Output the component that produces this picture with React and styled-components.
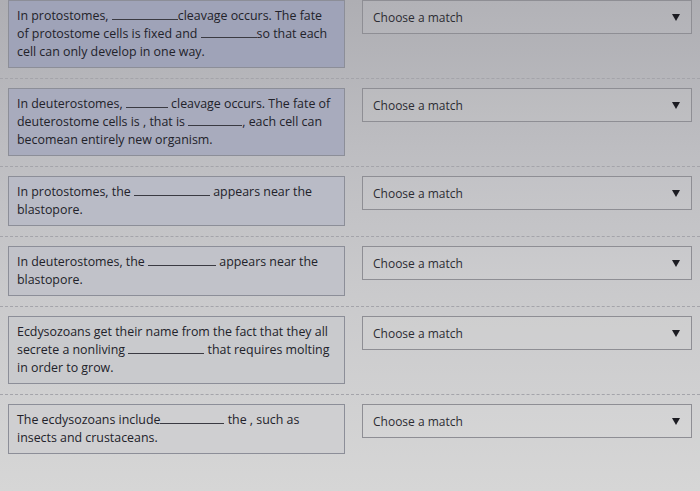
import React from 'react';
import styled, { createGlobalStyle } from 'styled-components';

const GlobalStyle = createGlobalStyle`
  html, body {
    margin: 0;
    padding: 0;
  }
  body {
    width: 700px;
    height: 491px;
    overflow: hidden;
    background: linear-gradient(180deg, #aeaeb3 0%, #bdbdc1 30%, #cacacc 60%, #d6d6d6 100%);
    font-family: "Open Sans", "Noto Sans", sans-serif;
  }
`;

const questions = [
  {
    tone: '#9fa3b8',
    lines: [
      ['In protostomes, ', 66, 'cleavage occurs. The fate'],
      ['of protostome cells is fixed and ', 56, 'so that each'],
      ['cell can only develop in one way.'],
    ],
  },
  {
    tone: '#a8abbd',
    lines: [
      ['In deuterostomes, ', 42, ' cleavage occurs. The fate of'],
      ['deuterostome cells is , that is ', 54, ', each cell can'],
      ['becomean entirely new organism.'],
    ],
  },
  {
    tone: '#b9bbc6',
    lines: [
      ['In protostomes, the ', 76, ' appears near the'],
      ['blastopore.'],
    ],
  },
  {
    tone: '#c1c2c9',
    lines: [
      ['In deuterostomes, the ', 68, ' appears near the'],
      ['blastopore.'],
    ],
  },
  {
    tone: '#c9cacd',
    lines: [
      ['Ecdysozoans get their name from the fact that they all'],
      ['secrete a nonliving ', 76, ' that requires molting'],
      ['in order to grow.'],
    ],
  },
  {
    tone: '#cfcfd1',
    lines: [
      ['The ecdysozoans include', 64, ' the , such as'],
      ['insects and crustaceans.'],
    ],
  },
];

const Page = styled.div`
  display: flex;
  flex-direction: column;
`;

const Row = styled.div`
  display: grid;
  grid-template-columns: 337px 330px;
  column-gap: 17px;
  align-items: start;
  padding: 0 8px 10px 8px;
  margin-bottom: 9px;
  border-bottom: 1px dashed ${props => (props.$last ? 'transparent' : '#a4a4aa')};
`;

const Card = styled.div`
  background-color: ${props => props.$tone};
  border: 1px solid #8c8e98;
  padding: 6px 8px;
  font-size: 12.4px;
  line-height: 18px;
  color: #22222a;
  white-space: nowrap;
`;

const Blank = styled.span`
  display: inline-block;
  width: ${props => props.$w}px;
  height: 11px;
  border-bottom: 1px solid #3a3a42;
  vertical-align: baseline;
`;

const Select = styled.div`
  display: flex;
  align-items: center;
  justify-content: space-between;
  height: 32px;
  padding: 0 11px 0 10px;
  border: 1px solid #8e8e94;
  background-color: rgba(255, 255, 255, 0.06);
  font-size: 12px;
  color: #2c2c33;
`;

const Caret = () => (
  <svg width="8" height="7" viewBox="0 0 8 7">
    <path d="M0 0 H8 L4 7 Z" fill="#1c1c22" />
  </svg>
);

export default function App() {
  return (
    <>
      <GlobalStyle />
      <Page>
        {questions.map((q, i) => (
          <Row key={i} $last={i === questions.length - 1}>
            <Card $tone={q.tone}>
              {q.lines.map((line, j) => (
                <React.Fragment key={j}>
                  {line[0]}
                  {line.length > 1 && <Blank $w={line[1]} />}
                  {line[2]}
                  {j < q.lines.length - 1 && <br />}
                </React.Fragment>
              ))}
            </Card>
            <Select>
              <span>Choose a match</span>
              <Caret />
            </Select>
          </Row>
        ))}
      </Page>
    </>
  );
}
